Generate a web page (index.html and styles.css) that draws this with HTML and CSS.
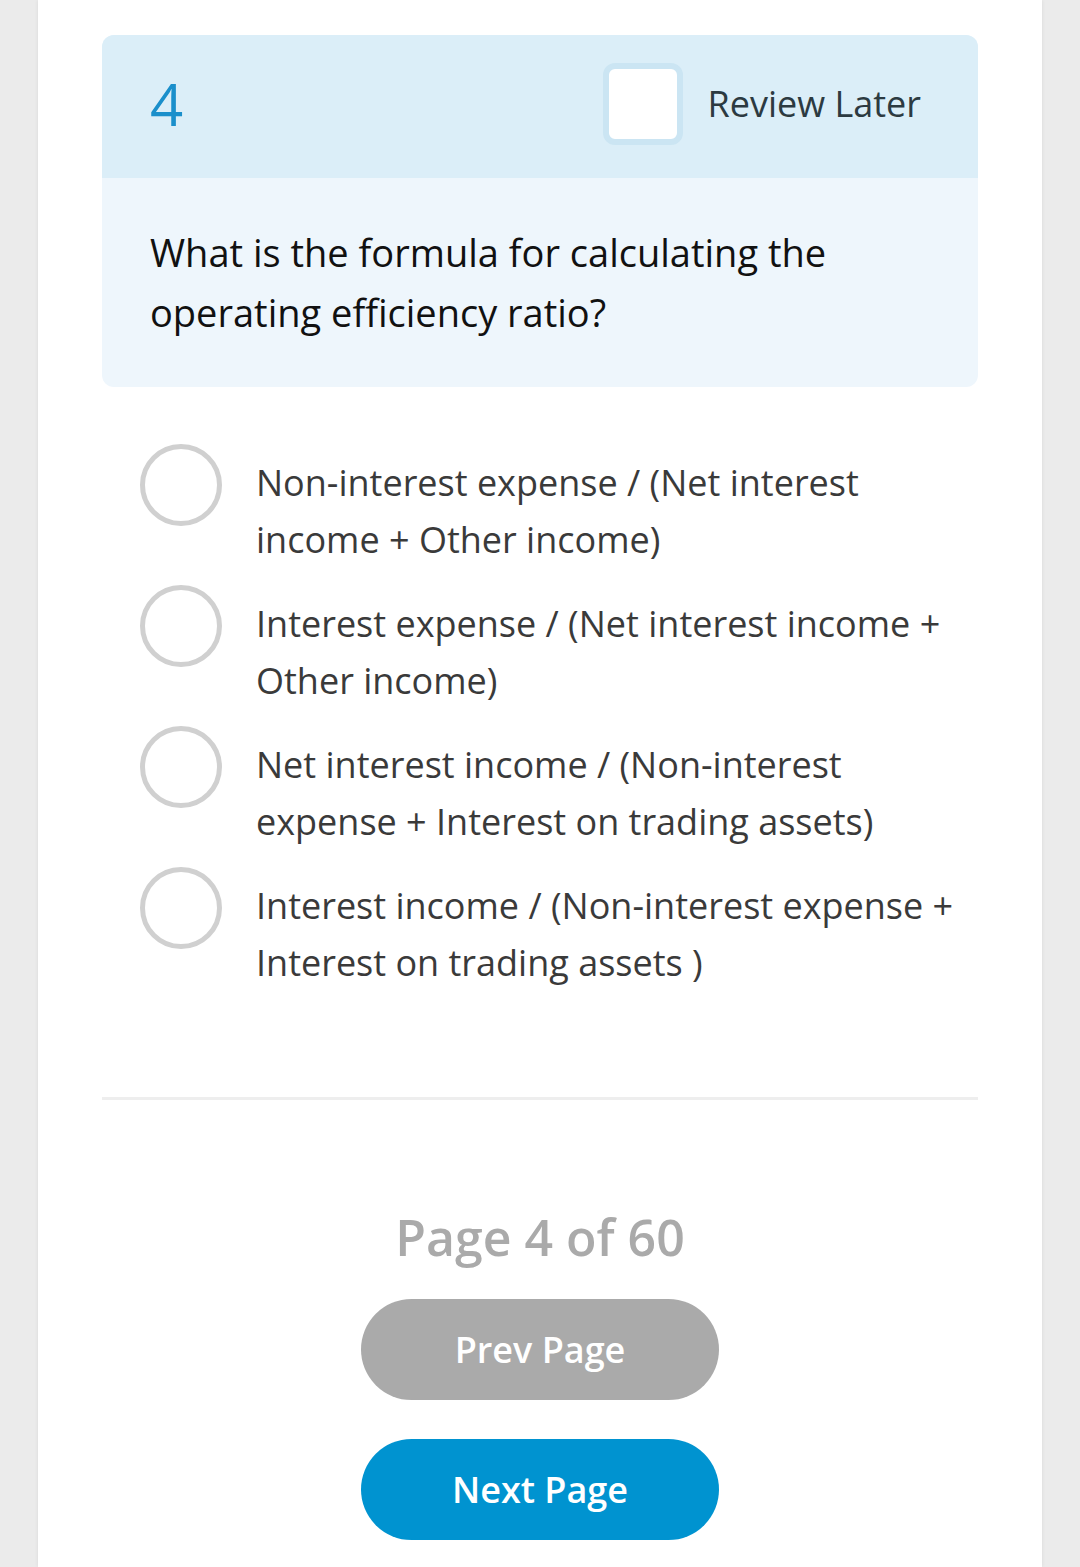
FILE: index.html
```html
<!DOCTYPE html>
<html lang="en">
<head>
    <meta charset="UTF-8">
    <meta name="viewport" content="width=device-width, initial-scale=1.0">
    <title>Quiz - Page 4</title>
    <link rel="stylesheet" href="styles.css">
</head>
<body>

<div class="sheet">
    <div class="question-box">
        <div class="question-head">
            <span class="question-number">4</span>
            <label class="review">
                <span class="review-check"></span>
                <span class="review-text">Review Later</span>
            </label>
        </div>
        <div class="question-body">
            What is the formula for calculating the operating efficiency ratio?
        </div>
    </div>

    <ul class="answers">
        <li class="answer">
            <span class="radio"></span>
            <span class="answer-text">Non-interest expense / (Net interest income + Other income)</span>
        </li>
        <li class="answer">
            <span class="radio"></span>
            <span class="answer-text">Interest expense / (Net interest income + Other income)</span>
        </li>
        <li class="answer">
            <span class="radio"></span>
            <span class="answer-text">Net interest income / (Non-interest expense + Interest on trading assets)</span>
        </li>
        <li class="answer">
            <span class="radio"></span>
            <span class="answer-text">Interest income / (Non-interest expense + Interest on trading assets )</span>
        </li>
    </ul>

    <hr class="divider">

    <div class="pager">
        <div class="page-count">Page 4 of 60</div>
        <button class="btn btn-prev">Prev Page</button>
        <button class="btn btn-next">Next Page</button>
    </div>
</div>

</body>
</html>
```

FILE: styles.css
```css
body {
    margin: 0;
    background-color: #ebebeb;
    font-family: "Open Sans", "Noto Sans", sans-serif;
}

.sheet {
    margin: 0 38px;
    min-height: 1567px;
    box-sizing: border-box;
    background-color: #fff;
    padding: 35px 64px 0;
    box-shadow: 0 0 4px rgba(0, 0, 0, 0.08);
}

.question-box {
    border-radius: 12px;
    overflow: hidden;
    background-color: #eef6fc;
}

.question-head {
    height: 143px;
    box-sizing: border-box;
    display: flex;
    align-items: center;
    justify-content: space-between;
    padding: 0 57px 6px 48px;
    background-color: #dbeef8;
}

.question-number {
    font-size: 58px;
    font-weight: 500;
    color: #1a8fcb;
    line-height: 1;
}

.review {
    display: flex;
    align-items: center;
    gap: 24px;
}

.review-check {
    width: 68px;
    height: 70px;
    border: 6px solid #cbe5f3;
    border-radius: 12px;
    background-color: #fff;
}

.review-text {
    font-size: 36px;
    color: #2c3a41;
}

.question-body {
    padding: 44px 48px 45px;
    font-size: 38px;
    line-height: 60px;
    color: #111;
}

.answers {
    list-style: none;
    margin: 0;
    padding: 57px 20px 0 38px;
    display: flex;
    flex-direction: column;
    gap: 17px;
}

.answer {
    display: flex;
    align-items: flex-start;
    gap: 34px;
}

.radio {
    flex: none;
    width: 72px;
    height: 72px;
    border: 5px solid #d0d0d0;
    border-radius: 50%;
}

.answer-text {
    font-size: 36px;
    line-height: 57px;
    color: #3a3a3a;
    margin-top: 10px;
}

.divider {
    border: none;
    height: 3px;
    background-color: #eeeeee;
    margin: 106px 0 0;
}

.pager {
    display: flex;
    flex-direction: column;
    align-items: center;
    padding-top: 104px;
}

.page-count {
    font-size: 50px;
    font-weight: 600;
    color: #aaaaaa;
    line-height: 66px;
    margin-bottom: 29px;
}

.btn {
    width: 358px;
    height: 101px;
    border: none;
    border-radius: 51px;
    font-family: inherit;
    font-size: 36px;
    font-weight: 600;
    color: #fff;
    cursor: pointer;
}

.btn-prev {
    background-color: #aaaaaa;
    margin-bottom: 39px;
}

.btn-next {
    background-color: #0093d0;
}
```
